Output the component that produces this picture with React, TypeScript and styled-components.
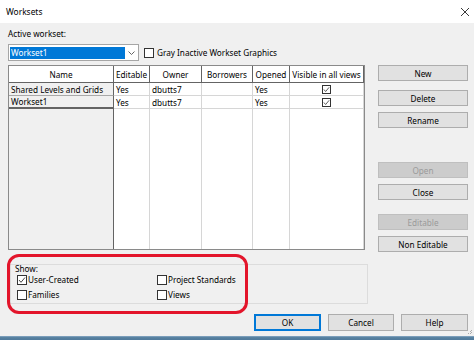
import styled, { createGlobalStyle } from "styled-components";

const GlobalStyle = createGlobalStyle`
  html, body {
    margin: 0;
    padding: 0;
    background: #f0f0f0;
  }
  body {
    font-family: "Noto Sans", "Open Sans", sans-serif;
    font-size: 8.2px;
    color: #000000;
  }
`;

const Window = styled.div`
  position: relative;
  width: 474px;
  height: 340px;
  overflow: hidden;
  display: flex;
  flex-direction: column;
  background: #f0f0f0;
`;

const TitleBar = styled.div`
  flex: 0 0 23px;
  display: flex;
  align-items: center;
  justify-content: space-between;
  padding: 0 4px 0 6px;
  background: #ffffff;
  font-size: 8.4px;
`;

const Content = styled.div`
  display: flex;
  flex-direction: column;
  padding: 5px 6px 0 8px;
`;

const FieldLabel = styled.div`
  line-height: 12px;
`;

const TopRow = styled.div`
  display: flex;
  align-items: center;
  height: 17px;
  margin-top: 4px;
`;

const Combo = styled.div`
  box-sizing: border-box;
  width: 131px;
  height: 17px;
  display: flex;
  align-items: center;
  padding-left: 1px;
  border: 1px solid #a6a6a6;
  background: #ffffff;
`;

const ComboValue = styled.div`
  flex: 0 0 114px;
  height: 12px;
  line-height: 12px;
  padding-left: 1px;
  background: #0078d7;
  color: #ffffff;
`;

const ComboArrow = styled.div`
  flex: 1;
  display: flex;
  justify-content: center;
  align-items: center;
`;

const CheckItem = styled.label<{ $gap?: number }>`
  display: flex;
  align-items: center;
  gap: ${(p) => p.$gap ?? 1}px;
  white-space: nowrap;
`;

const Box = styled.span<{ $size?: number }>`
  box-sizing: border-box;
  width: ${(p) => p.$size ?? 10}px;
  height: ${(p) => p.$size ?? 10}px;
  display: inline-flex;
  align-items: center;
  justify-content: center;
  border: 1px solid #333333;
  background: #ffffff;
`;

const GrayCheck = styled(CheckItem)`
  margin-left: 5px;
`;

const MainRow = styled.div`
  display: flex;
  gap: 13px;
  margin-top: 4px;
`;

const Grid = styled.div`
  box-sizing: border-box;
  width: 357px;
  height: 185px;
  display: grid;
  grid-template-columns: 105px 36px 52px 51px 37px 1fr;
  grid-template-rows: 17px 13px 13px 1fr;
  border: 1px solid #8a8a8a;
  background: #ffffff;
`;

const HeadCell = styled.div`
  display: flex;
  align-items: center;
  justify-content: center;
  white-space: nowrap;
  overflow: hidden;
  background: #ffffff;
  border-right: 1px solid #646464;
  border-bottom: 1px solid #646464;
`;

const NameCell = styled.div<{ $last?: boolean }>`
  display: flex;
  align-items: center;
  padding-left: 2px;
  white-space: nowrap;
  background: #f0f0f0;
  border-right: 1px solid #646464;
  border-bottom: ${(p) => (p.$last ? "2px solid #646464" : "1px solid #a8a8a8")};
`;

const NameFill = styled.div`
  background: #f0f0f0;
  border-right: 1px solid #646464;
`;

const DataCell = styled.div<{ $center?: boolean }>`
  display: flex;
  align-items: center;
  justify-content: ${(p) => (p.$center ? "center" : "flex-start")};
  padding-left: ${(p) => (p.$center ? 0 : 2)}px;
  background: #ffffff;
  border-right: 1px solid #d6d6d6;
  border-bottom: 1px solid #d6d6d6;
`;

const DataFill = styled.div`
  background: #ffffff;
  border-right: 1px solid #d6d6d6;
`;

const ButtonColumn = styled.div`
  display: flex;
  flex-direction: column;
  width: 90px;
`;

const Button = styled.div<{ $top?: number; $disabled?: boolean; $default?: boolean; $width?: number }>`
  box-sizing: border-box;
  width: ${(p) => p.$width ?? 90}px;
  height: ${(p) => (p.$width ? 17 : 16)}px;
  margin-top: ${(p) => p.$top ?? 0}px;
  display: flex;
  align-items: center;
  justify-content: center;
  background: ${(p) => (p.$disabled ? "#cccccc" : "#e1e1e1")};
  color: ${(p) => (p.$disabled ? "#9a9a9a" : "#000000")};
  border: 1px solid
    ${(p) => (p.$default ? "#0078d7" : p.$disabled ? "#bfbfbf" : "#adadad")};
  box-shadow: ${(p) => (p.$default ? "inset 0 0 0 1px #0078d7" : "none")};
`;

const ShowGroup = styled.div`
  box-sizing: border-box;
  width: 358px;
  height: 40px;
  margin: 12px 0 0 2px;
  padding-left: 4px;
  border: 1px solid #dcdcdc;
`;

const GroupTitle = styled.div`
  line-height: 7px;
  height: 7px;
`;

const ShowGrid = styled.div`
  display: grid;
  grid-template-columns: 140px 1fr;
  grid-auto-rows: 15px;
  align-items: center;
  padding-left: 2px;
`;

const BottomRow = styled.div`
  display: flex;
  justify-content: flex-end;
  gap: 7px;
  margin-top: 10px;
`;

const TaskStrip = styled.div`
  margin-top: auto;
  height: 4px;
  background: linear-gradient(#8aa9c6, #56809f 40%, #4f7a9c);
`;

const Highlight = styled.div`
  position: absolute;
  left: 7px;
  top: 254px;
  width: 241px;
  height: 60px;
  box-sizing: border-box;
  border: 3px solid #e3152b;
  border-radius: 12px;
  pointer-events: none;
`;

const Grip = styled.svg`
  position: absolute;
  right: 2px;
  bottom: 6px;
`;

const Tick = ({ size = 10 }: { size?: number }) => (
  <svg width={size - 2} height={size - 2} viewBox="0 0 8 8">
    <polyline points="1,4 3,6.3 7,1.5" fill="none" stroke="#333" strokeWidth="0.9" />
  </svg>
);

const Check = ({ label, checked, gap }: { label: string; checked?: boolean; gap?: number }) => (
  <CheckItem $gap={gap}>
    <Box>{checked && <Tick />}</Box>
    {label}
  </CheckItem>
);

const rows = [
  { name: "Shared Levels and Grids", editable: "Yes", owner: "dbutts7", opened: "Yes" },
  { name: "Workset1", editable: "Yes", owner: "dbutts7", opened: "Yes" },
];

export default function App() {
  return (
    <Window>
      <GlobalStyle />
      <TitleBar>
        <span>Worksets</span>
        <svg width="10" height="10" viewBox="0 0 10 10">
          <path d="M1 1 L9 9 M9 1 L1 9" stroke="#222" strokeWidth="0.9" />
        </svg>
      </TitleBar>
      <Content>
        <FieldLabel>Active workset:</FieldLabel>
        <TopRow>
          <Combo>
            <ComboValue>Workset1</ComboValue>
            <ComboArrow>
              <svg width="7" height="4" viewBox="0 0 7 4">
                <polyline points="0.5,0.5 3.5,3.5 6.5,0.5" fill="none" stroke="#555" strokeWidth="0.9" />
              </svg>
            </ComboArrow>
          </Combo>
          <GrayCheck $gap={3}>
            <Box />
            Gray Inactive Workset Graphics
          </GrayCheck>
        </TopRow>
        <MainRow>
          <Grid>
            <HeadCell>Name</HeadCell>
            <HeadCell>Editable</HeadCell>
            <HeadCell>Owner</HeadCell>
            <HeadCell>Borrowers</HeadCell>
            <HeadCell>Opened</HeadCell>
            <HeadCell>Visible in all views</HeadCell>
            {rows.map((r, i) => [
              <NameCell key={`n${i}`} $last={i === rows.length - 1}>{r.name}</NameCell>,
              <DataCell key={`e${i}`}>{r.editable}</DataCell>,
              <DataCell key={`o${i}`}>{r.owner}</DataCell>,
              <DataCell key={`b${i}`} />,
              <DataCell key={`p${i}`}>{r.opened}</DataCell>,
              <DataCell key={`v${i}`} $center>
                <Box $size={9}>
                  <Tick size={9} />
                </Box>
              </DataCell>,
            ])}
            <NameFill />
            <DataFill />
            <DataFill />
            <DataFill />
            <DataFill />
            <DataFill />
          </Grid>
          <ButtonColumn>
            <Button>New</Button>
            <Button $top={9}>Delete</Button>
            <Button $top={6}>Rename</Button>
            <Button $top={34} $disabled>Open</Button>
            <Button $top={6}>Close</Button>
            <Button $top={14} $disabled>Editable</Button>
            <Button $top={6}>Non Editable</Button>
          </ButtonColumn>
        </MainRow>
        <ShowGroup>
          <GroupTitle>Show:</GroupTitle>
          <ShowGrid>
            <Check label="User-Created" checked />
            <Check label="Project Standards" />
            <Check label="Families" />
            <Check label="Views" />
          </ShowGrid>
        </ShowGroup>
        <BottomRow>
          <Button $width={67} $default>OK</Button>
          <Button $width={66}>Cancel</Button>
          <Button $width={67}>Help</Button>
        </BottomRow>
      </Content>
      <TaskStrip />
      <Highlight />
      <Grip width="4" height="4" viewBox="0 0 4 4">
        <rect x="3" y="0" width="1" height="1" fill="#aaa" />
        <rect x="2" y="1" width="1" height="1" fill="#aaa" />
        <rect x="3" y="2" width="1" height="1" fill="#aaa" />
        <rect x="0" y="3" width="1" height="1" fill="#aaa" />
        <rect x="2" y="3" width="1" height="1" fill="#aaa" />
      </Grip>
    </Window>
  );
}
